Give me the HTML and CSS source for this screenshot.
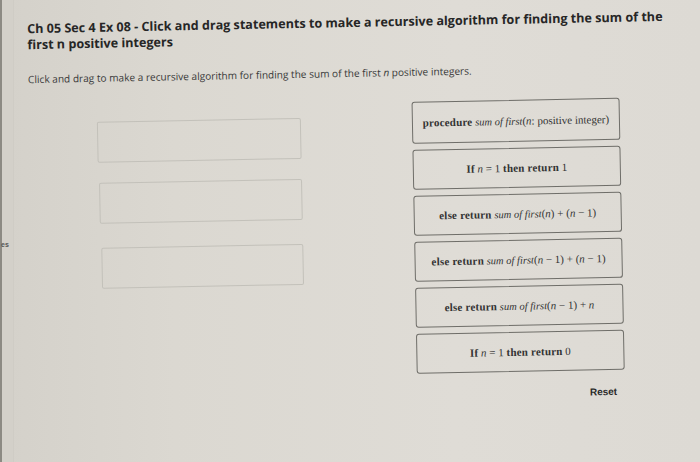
FILE: index.html
```html
<!DOCTYPE html>
<html>
<head>
<meta charset="utf-8">
<link rel="stylesheet" href="styles.css">
</head>
<body>
<div class="page">
  <div class="edge">
    <div class="edge-panel"><span class="edge-text">es</span></div>
  </div>
  <div class="main">
    <h1 class="title">Ch 05 Sec 4 Ex 08 - Click and drag statements to make a recursive algorithm for finding the sum of the first n positive integers</h1>
    <p class="prompt">Click and drag to make a recursive algorithm for finding the sum of the first <i>n</i> positive integers.</p>
    <div class="work">
      <div class="targets">
        <div class="slot"></div>
        <div class="slot slot2"></div>
        <div class="slot slot3"></div>
      </div>
      <div class="bank">
        <div class="choice choice-first"><span><b>procedure</b> <i class="fn">sum of first</i>(<i>n</i>: positive integer)</span></div>
        <div class="choice"><span><b>If</b> <i>n</i> = 1 <b>then return</b> 1</span></div>
        <div class="choice"><span><b>else return</b> <i class="fn">sum of first</i>(<i>n</i>) + (<i>n</i> &minus; 1)</span></div>
        <div class="choice"><span><b>else return</b> <i class="fn">sum of first</i>(<i>n</i> &minus; 1) + (<i>n</i> &minus; 1)</span></div>
        <div class="choice"><span><b>else return</b> <i class="fn">sum of first</i>(<i>n</i> &minus; 1) + <i>n</i></span></div>
        <div class="choice"><span><b>If</b> <i>n</i> = 1 <b>then return</b> 0</span></div>
        <div class="reset-row"><span class="reset">Reset</span></div>
      </div>
    </div>
  </div>
</div>
</body>
</html>
```

FILE: styles.css
```css
html, body {
  margin: 0;
  padding: 0;
}
body {
  width: 700px;
  height: 462px;
  overflow: hidden;
  background: linear-gradient(90deg, #d4d1ca 0%, #dbd8d1 25%, #dfdcd6 65%, #dddad4 100%);
  font-family: "Open Sans", "Liberation Sans", sans-serif;
  color: #2a2a2a;
}
.page {
  display: flex;
  height: 462px;
}
.edge {
  width: 12px;
  flex: none;
  border-left: 2px solid #8c8a83;
  display: flex;
}
.edge-panel {
  flex: 1;
  border-right: 1px solid #cfccc5;
  background: #d3d0c9;
  padding-top: 241px;
}
.edge-text {
  display: block;
  font-family: "Liberation Sans", sans-serif;
  font-size: 7px;
  font-weight: bold;
  color: #555;
  margin-left: -1px;
}
.main {
  flex: 1;
  padding-left: 17px;
  transform: rotate(-1.1deg);
  transform-origin: 336px 231px;
}
.title {
  margin: 15px 0 0 0;
  width: 650px;
  font-size: 12.6px;
  line-height: 16px;
  font-weight: 700;
  color: #262626;
}
.prompt {
  margin: 20px 0 0 0;
  font-size: 10.1px;
  line-height: 12px;
  color: #3a3a3a;
}
.work {
  display: flex;
  margin-top: 24px;
}
.targets {
  display: flex;
  flex-direction: column;
  margin-left: 68px;
  margin-top: 14px;
  width: 204px;
  flex: none;
}
.slot {
  height: 39px;
  border: 1px solid #c3c1ba;
  border-radius: 2px;
}
.slot2 {
  margin-top: 20px;
  margin-left: 1px;
}
.slot3 {
  margin-top: 24px;
  margin-left: 2px;
}
.bank {
  display: flex;
  flex-direction: column;
  gap: 6px;
  margin-left: 111px;
  width: 208px;
  flex: none;
}
.choice {
  height: 38px;
  border: 1px solid #6f6e69;
  border-radius: 3px;
  display: flex;
  align-items: center;
  justify-content: center;
  font-family: "Liberation Serif", "DejaVu Serif", serif;
  font-size: 11px;
  color: #333;
}
.choice-first {
  height: 40px;
}
.choice b {
  font-weight: bold;
  letter-spacing: 0.2px;
  color: #333;
}
.choice i {
  font-style: italic;
}
.fn {
  font-size: 10.5px;
}
.reset-row {
  display: flex;
  justify-content: flex-end;
  padding-right: 8px;
  margin-top: 10px;
}
.reset {
  font-family: "Liberation Sans", sans-serif;
  font-weight: bold;
  font-size: 10px;
  line-height: 12px;
  color: #2a2a2a;
}
```
